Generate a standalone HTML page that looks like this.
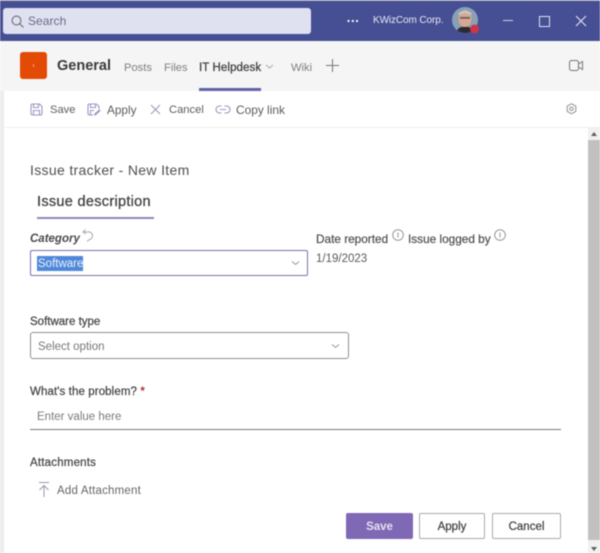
<!DOCTYPE html>
<html><head><meta charset="utf-8"><style>
html,body{margin:0;padding:0;background:#fff}
#p{position:relative;width:600px;height:553px;overflow:hidden;background:#fff;font-family:"Liberation Sans",sans-serif;color:#484848;filter:blur(.45px)}
#p>*{position:absolute}
.t{white-space:nowrap;line-height:16px}
svg{overflow:visible}
</style></head><body><div id="p">
<div style="left:0;top:0;width:600px;height:41px;background:#464f93;border-top:1px solid #a9a9b5;box-sizing:border-box"></div>
<div style="left:3px;top:8px;width:308px;height:26px;background:#dfe0f0;border-radius:3px"></div>
<svg style="left:11px;top:15px" width="13" height="13" fill="none" stroke="#6e6e78" stroke-width="1.1"><circle cx="5.500" cy="5.500" r="4.400"/><path d="M8.800 8.800L12.500 12.500"/></svg>
<div class="t" style="left:28px;top:13px;font-size:12px;color:#6a6c88;letter-spacing:.05px">Search</div>
<svg style="left:347px;top:19px" width="12" height="4" fill="#fff"><circle cx="1.500" cy="2" r="1.100"/><circle cx="5.800" cy="2" r="1.100"/><circle cx="10" cy="2" r="1.100"/></svg>
<div class="t" style="left:373px;top:13px;font-size:10px;color:#e8e9f5;letter-spacing:-.1px">KWizCom Corp.</div>
<svg style="left:452px;top:7px" width="28" height="28"><defs><clipPath id="c"><circle cx="13" cy="13" r="13"/></clipPath></defs><g clip-path="url(#c)"><rect width="26" height="26" fill="#8aa0b5"/><ellipse cx="13" cy="12" rx="6.500" ry="8" fill="#d9a892"/><path d="M6 7Q13 0 20 7L19 8Q13 4 7 8Z" fill="#c9c9c9"/><path d="M8 10h10v1.800H8z" fill="#6d5f5f"/><path d="M4 26Q6 19 13 20Q20 19 22 26Z" fill="#2c2a30"/></g><circle cx="22.500" cy="22" r="4.500" fill="#d13447"/></svg>
<div style="left:503px;top:20px;width:10px;height:1px;background:#cfd2ea"></div>
<div style="left:539px;top:16px;width:9px;height:9px;border:1px solid #dfe1f2"></div>
<svg style="left:576px;top:16px" width="10" height="10" stroke="#e8e9f5" stroke-width="1"><path d="M0 0L10 10M10 0L0 10"/></svg>

<div style="left:0;top:41px;width:600px;height:50px;background:#f5f5f5"></div>
<div style="left:20px;top:52px;width:27px;height:27px;border-radius:3px;background:#e34a05"></div>
<div style="left:33px;top:64px;width:1px;height:3px;background:#f3a77f"></div>
<div class="t" style="left:57px;top:58px;font-size:14.500px;font-weight:bold;color:#3a3a3a">General</div>
<div class="t" style="left:124px;top:60px;font-size:11.200px;color:#808080">Posts</div>
<div class="t" style="left:164px;top:60px;font-size:11.200px;color:#808080">Files</div>
<div class="t" style="left:199px;top:60px;font-size:11.500px;color:#444;-webkit-text-stroke:.3px #444;letter-spacing:.1px">IT Helpdesk</div>
<svg style="left:266px;top:65px" width="7" height="4" fill="none" stroke="#aaa"><path d="M0 0L3.500 3L7 0"/></svg>
<div class="t" style="left:291px;top:60px;font-size:11.200px;color:#808080">Wiki</div>
<svg style="left:326px;top:59px" width="13" height="13" stroke="#777" stroke-width="1"><path d="M6.500 0V13M0 6.500H13"/></svg>
<div style="left:199px;top:88px;width:62px;height:2.500px;background:#6264a7"></div>
<svg style="left:569px;top:60px" width="14" height="11" fill="none" stroke="#777"><rect x=".5" y=".5" width="9" height="10" rx="2"/><path d="M9.500 4L13.500 1.500V9.500L9.500 7"/></svg>

<div style="left:0;top:91px;width:600px;height:36px;background:#fff;border-bottom:1px solid #eee"></div>
<svg style="left:30px;top:103px" width="13" height="13" fill="none" stroke="#9d96c4" stroke-width="1.100"><path d="M1 2.500Q1 1 2.500 1H9.500L12 3.500V10.500Q12 12 10.500 12H2.500Q1 12 1 10.500Z"/><path d="M3.500 1V4.500H8.500V1M3.500 12V7.500H9.500V12"/></svg>
<div class="t" style="left:50px;top:102px;font-size:11.200px;color:#5c5c5c">Save</div>
<svg style="left:87px;top:103px" width="14" height="13" fill="none" stroke="#9d96c4" stroke-width="1.100"><path d="M6 12H2.500Q1 12 1 10.500V2.500Q1 1 2.500 1H9.500L12 3.500V6"/><path d="M3.500 1V4.500H8.500V1M3.500 12V7.500H7"/><path d="M7.500 12L13 7" stroke-width="2"/></svg>
<div class="t" style="left:107px;top:102px;font-size:11.800px;color:#5c5c5c">Apply</div>
<svg style="left:151px;top:105px" width="9" height="9" stroke="#9a97ad" stroke-width="1"><path d="M0 0L9 9M9 0L0 9"/></svg>
<div class="t" style="left:169px;top:102px;font-size:11.200px;color:#5c5c5c">Cancel</div>
<svg style="left:216px;top:105px" width="14" height="9" fill="none" stroke="#9d96c4" stroke-width="1.100"><path d="M5.500 1H3.500A3.500 3.500 0 0 0 3.500 8H5.500M8.500 1H10.500A3.500 3.500 0 0 1 10.500 8H8.500M4 4.500H10"/></svg>
<div class="t" style="left:236px;top:102px;font-size:11.900px;color:#5c5c5c">Copy link</div>
<svg style="left:566px;top:103px" width="11" height="12" fill="none" stroke="#9a9a9a" stroke-width="1.100"><path d="M5.500 .7L9.800 3.100V8.400L5.500 10.800L1.200 8.400V3.100Z"/><circle cx="5.500" cy="5.800" r="1.700"/></svg>

<div style="left:0;top:91px;width:4px;height:462px;background:#ececec"></div>
<div style="left:588px;top:128px;width:12px;height:425px;background:#f1f1f1"></div>
<div style="left:588px;top:140px;width:12px;height:400px;background:#c1c1c1"></div>
<div style="left:591px;top:132px;width:0;height:0;border:3px solid transparent;border-top:0;border-bottom:4px solid #606060"></div>
<div style="left:591px;top:547px;width:0;height:0;border:3px solid transparent;border-bottom:0;border-top:4px solid #606060"></div>

<div class="t" style="left:30px;top:162px;font-size:14px;color:#505050;letter-spacing:.33px">Issue tracker - New Item</div>
<div class="t" style="left:37px;top:194px;font-size:14.500px;color:#444;-webkit-text-stroke:.3px #444;letter-spacing:.3px">Issue description</div>
<div style="left:37px;top:217px;width:117px;height:1.500px;background:#8f86bd"></div>

<div class="t" style="left:30px;top:231px;font-size:11.500px;font-style:italic;font-weight:bold;color:#4a4a4a">Category</div>
<svg style="left:82px;top:229px" width="11" height="13" fill="none" stroke="#aaa" stroke-width="1"><path d="M3.500 .5L1 3L4 5M1 3H6A3.800 3.800 0 0 1 7.500 10.500L5 12.500"/></svg>
<div style="left:30px;top:250px;width:278px;height:26px;box-sizing:border-box;border:1.500px solid #7c6fb2;border-radius:2px;background:#fff"></div>
<div style="left:37px;top:256px;width:46px;height:15px;background:#4f88d9"></div>
<div class="t" style="left:38px;top:256px;font-size:11.500px;color:#e9f1fc">Software</div>
<svg style="left:292px;top:261px" width="7" height="4" fill="none" stroke="#999"><path d="M0 .5L3.500 3.500L7 .5"/></svg>

<div class="t" style="left:316px;top:231px;font-size:11.800px;-webkit-text-stroke:.25px #555;color:#555">Date reported</div>
<svg style="left:392px;top:229px" width="12" height="12" fill="none" stroke="#999"><circle cx="6" cy="6" r="5.300"/><path d="M6 3.500V8.500"/></svg>
<div class="t" style="left:408px;top:231px;font-size:11.800px;-webkit-text-stroke:.25px #555;color:#555">Issue logged by</div>
<svg style="left:494px;top:229px" width="12" height="12" fill="none" stroke="#999"><circle cx="6" cy="6" r="5.300"/><path d="M6 3.500V8.500"/></svg>
<div class="t" style="left:316px;top:251px;font-size:11.500px;color:#5a5a5a">1/19/2023</div>

<div class="t" style="left:30px;top:314px;font-size:11.500px;-webkit-text-stroke:.25px #484848;color:#484848">Software type</div>
<div style="left:30px;top:332px;width:319px;height:27px;box-sizing:border-box;border:1px solid #8e8e8e;border-radius:3px"></div>
<div class="t" style="left:38px;top:339px;font-size:11.500px;color:#777">Select option</div>
<svg style="left:332px;top:344px" width="7" height="4" fill="none" stroke="#999"><path d="M0 .5L3.500 3.500L7 .5"/></svg>

<div class="t" style="left:30px;top:384px;font-size:11.500px;letter-spacing:.1px;-webkit-text-stroke:.25px #484848;color:#484848">What's the problem? <span style="color:#a4262c;-webkit-text-stroke:.25px #a4262c">*</span></div>
<div class="t" style="left:37px;top:409px;font-size:11.500px;color:#7a7a7a">Enter value here</div>
<div style="left:30px;top:429px;width:531px;height:1px;background:#777"></div>

<div class="t" style="left:30px;top:455px;font-size:11.500px;letter-spacing:.2px;-webkit-text-stroke:.25px #484848;color:#484848">Attachments</div>
<svg style="left:38px;top:482px" width="12" height="15" fill="none" stroke="#9a97ad" stroke-width="1"><path d="M1 .5H11M6 15V3.500M1.500 8L6 3.500L10.500 8"/></svg>
<div class="t" style="left:57px;top:483px;font-size:11.500px;letter-spacing:.2px;color:#666">Add Attachment</div>

<div style="left:346px;top:513px;width:67px;height:26px;background:#7f68b4;border-radius:2px"></div>
<div class="t" style="left:346px;top:519px;width:67px;text-align:center;font-size:11.500px;font-weight:bold;color:#e6e0f2">Save</div>
<div style="left:419px;top:513px;width:66px;height:26px;box-sizing:border-box;border:1px solid #aaa;border-radius:2px;background:#fff"></div>
<div class="t" style="left:419px;top:519px;width:66px;text-align:center;font-size:11.500px;-webkit-text-stroke:.25px #444;color:#444">Apply</div>
<div style="left:492px;top:513px;width:69px;height:26px;box-sizing:border-box;border:1px solid #aaa;border-radius:2px;background:#fff"></div>
<div class="t" style="left:492px;top:519px;width:69px;text-align:center;font-size:11.500px;-webkit-text-stroke:.25px #444;color:#444">Cancel</div>
</div></body></html>
